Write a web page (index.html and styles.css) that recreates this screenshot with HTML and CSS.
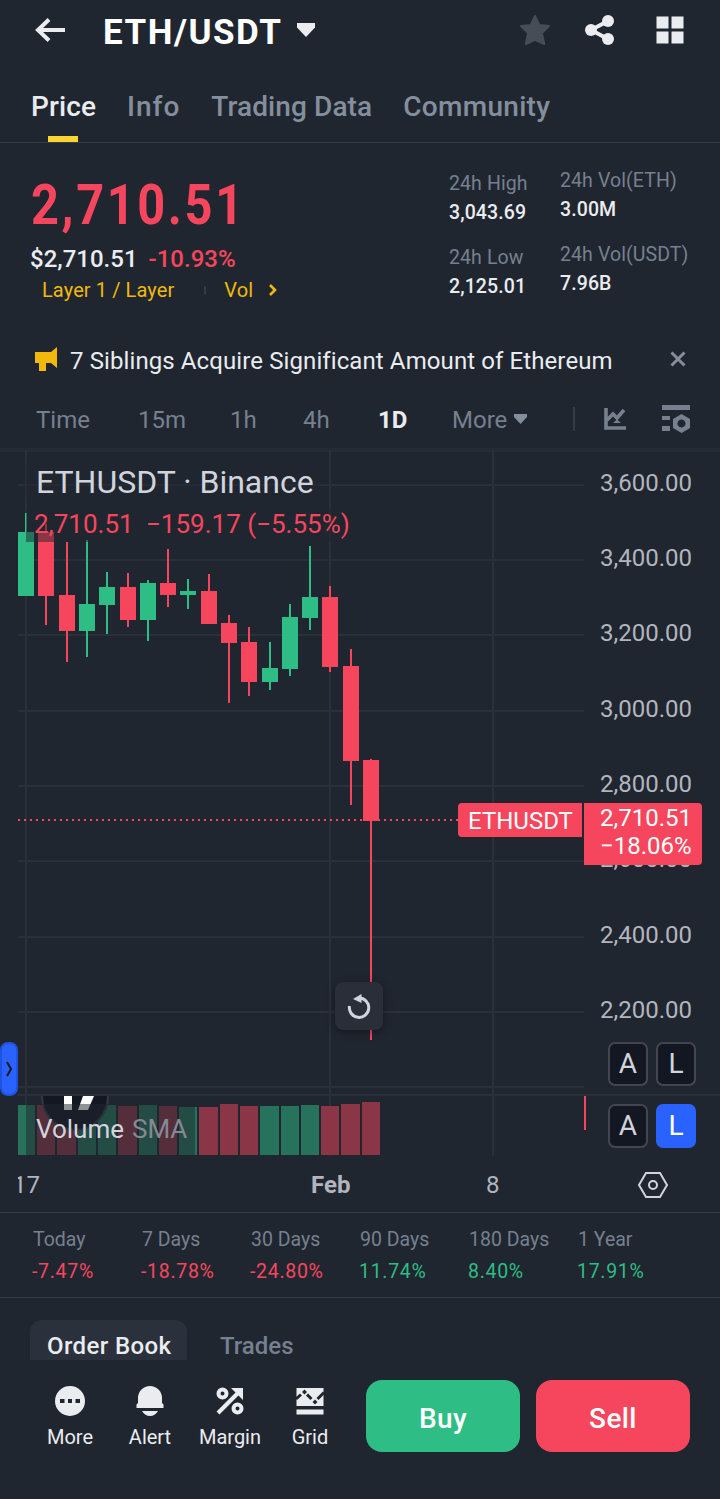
FILE: index.html
```html
<!DOCTYPE html>
<html lang="en">

<head>
    <meta charset="UTF-8">
    <meta name="viewport" content="width=device-width, initial-scale=1.0">
    <title>ETH/USDT</title>
    <link rel="stylesheet" href="styles.css">
</head>

<body>
    <header class="topbar">
        <svg class="back" width="32" height="26" viewBox="0 0 32 26" fill="none" stroke="#eaecef" stroke-width="4">
            <path d="M31 13H4M15 2.5L4 13l11 10.500" />
        </svg>
        <h1 class="pair">ETH/USDT</h1>
        <svg class="pair-arrow" width="18" height="14" viewBox="0 0 18 14"><path d="M0 0h18v4.500L9 14 0 4.500z" fill="#eaecef" /></svg>
        <div class="top-icons">
            <svg width="30" height="30" viewBox="0 0 30 30"><path d="M15 1l4.200 9 9.800 1.100-7.100 7 2.300 10.900L15 24.800 5.800 29l2.300-10.900-7.100-7L10.800 10z" fill="#474d57" stroke="#474d57" stroke-width="2" stroke-linejoin="round" /></svg>
            <svg class="share" width="30" height="30" viewBox="0 0 30 30" fill="#eaecef">
                <path d="M6 15L23 6M6 15l17 9" stroke="#eaecef" stroke-width="4" />
                <circle cx="6" cy="15" r="6" /><circle cx="23" cy="6" r="6" /><circle cx="23" cy="24" r="6" />
            </svg>
            <svg width="28" height="28" viewBox="0 0 28 28" fill="#eaecef"><path d="M.5.5h12v12H.5zM15.500.5h12v12h-12zM.5 15.500h12v12H.5zM15.500 15.500h12v12h-12z" /></svg>
        </div>
    </header>

    <nav class="tabs">
        <a class="tab active">Price</a>
        <a class="tab info">Info</a>
        <a class="tab">Trading Data</a>
        <a class="tab community">Community</a>
    </nav>

    <section class="summary">
        <div class="price-col">
            <div class="last-price">2,710.51</div>
            <div class="fiat"><span>$2,710.51</span><span class="red">-10.93%</span></div>
            <div class="tags">
                <span>Layer 1 / Layer</span>
                <i class="tag-line"></i>
                <span>Vol</span>
                <svg width="8" height="12" viewBox="0 0 8 12" fill="none" stroke="#f0b90b" stroke-width="2.600"><path d="M1 1l5 5-5 5" /></svg>
            </div>
        </div>
        <dl class="stats">
            <dt>24h High</dt>
            <dd>3,043.69</dd>
            <dt>24h Low</dt>
            <dd>2,125.01</dd>
        </dl>
        <dl class="stats vol">
            <dt>24h Vol(ETH)</dt>
            <dd>3.00M</dd>
            <dt>24h Vol(USDT)</dt>
            <dd>7.96B</dd>
        </dl>
    </section>

    <div class="notice">
        <svg width="22" height="24" viewBox="0 0 22 24"><path d="M0 5h16l6-5v21l-6-5h-5v8H4v-8H0z" fill="#f0b90b" /></svg>
        <p>7 Siblings Acquire Significant Amount of Ethereum</p>
        <svg width="16" height="16" viewBox="0 0 16 16" stroke="#848e9c" stroke-width="3"><path d="M1.500 1.500l13 13M14.500 1.500l-13 13" /></svg>
    </div>

    <nav class="intervals">
        <span>Time</span>
        <span>15m</span>
        <span>1h</span>
        <span>4h</span>
        <span class="active">1D</span>
        <span class="more">More <svg width="13" height="10" viewBox="0 0 13 10"><path d="M0 0h13v3L6.500 10 0 3z" fill="#848e9c" /></svg></span>
        <i class="split"></i>
        <svg width="22" height="22" viewBox="0 0 22 22">
            <path d="M2 0v20h20M3 12l6-6 4 4 7-8" fill="none" stroke="#76808f" stroke-width="3.600" />
            <path d="M9 15l4-3.500 4 3.500z" fill="#76808f" />
        </svg>
        <svg width="28" height="28" viewBox="0 0 28 28" fill="#76808f">
            <path d="M0 0h28v5H0zM0 11h8v4H0zM0 21h8v5H0z" />
            <path fill-rule="evenodd" d="M19.500 9l8.500 5v9l-8.500 5-8.500-5v-9zM19.500 14.500a4 4 0 1 0 .01 0z" />
        </svg>
    </nav>

    <svg class="chart" width="720" height="764" viewBox="0 448 720 764">
        <rect x="0" y="448" width="720" height="4" fill="#252b35" />
        <!-- grid -->
        <path class="grid" d="M18 485h566M18 560h566M18 635h566M18 711h566M18 786h566M18 861h566M18 937h566M18 1012h566M18 1087h566M18 1095h702M26 450v706M330 450v706M493 450v706" />

        <!-- candles -->
        <path class="up" d="M25 513h2v20h-2zM18 532h16v64H18z" />
        <path class="down" d="M45 524h2v101h-2zM38 532h16v64H38z" />
        <path class="down" d="M66 542h2v120h-2zM59 595h16v36H59z" />
        <path class="up" d="M86 540h2v117h-2zM79 604h16v27H79z" />
        <path class="up" d="M106 572h2v62h-2zM99 587h16v18H99z" />
        <path class="down" d="M127 573h2v54h-2zM120 587h16v33h-16z" />
        <path class="up" d="M147 580h2v61h-2zM140 583h16v37h-16z" />
        <path class="down" d="M167 549h2v58h-2zM160 583h16v12h-16z" />
        <path class="up" d="M187 579h2v30h-2zM180 591h16v4h-16z" />
        <path class="down" d="M208 574h2v50h-2zM201 591h16v33h-16z" />
        <path class="down" d="M228 615h2v88h-2zM221 623h16v20h-16z" />
        <path class="down" d="M248 627h2v69h-2zM241 642h16v40h-16z" />
        <path class="up" d="M269 642h2v48h-2zM262 668h16v14h-16z" />
        <path class="up" d="M289 604h2v72h-2zM282 617h16v52h-16z" />
        <path class="up" d="M309 546h2v84h-2zM302 597h16v21h-16z" />
        <path class="down" d="M329 586h2v86h-2zM322 597h16v70h-16z" />
        <path class="down" d="M350 649h2v156h-2zM343 666h16v95h-16z" />
        <path class="down" d="M370 759h2v281h-2zM363 760h16v61h-16z" />

        <!-- legend -->
        <rect class="legend-bg" x="26" y="464" width="294" height="38" />
        <rect class="legend-bg" x="26" y="508" width="331" height="34" />
        <text class="legend-title" x="36" y="493">ETHUSDT · Binance</text>
        <text class="legend-value" x="34" y="533">2,710.51</text>
        <text class="legend-value" x="146" y="533">−159.17 (−5.55%)</text>

        <!-- price axis -->
        <g class="axis">
            <text x="600" y="491">3,600.00</text>
            <text x="600" y="566">3,400.00</text>
            <text x="600" y="641">3,200.00</text>
            <text x="600" y="717">3,000.00</text>
            <text x="600" y="792">2,800.00</text>
            <text x="600" y="867">2,600.00</text>
            <text x="600" y="943">2,400.00</text>
            <text x="600" y="1018">2,200.00</text>
        </g>
        <path d="M18 820h440" stroke="#f6465d" stroke-width="2" stroke-dasharray="2 4" />
        <path class="down" d="M462 803h120v34H462a4 4 0 0 1-4-4v-26a4 4 0 0 1 4-4z" />
        <path class="down" d="M584 803h114a4 4 0 0 1 4 4v54a4 4 0 0 1-4 4H584z" />
        <g class="label">
            <text x="468" y="829">ETHUSDT</text>
            <text x="600" y="826">2,710.51</text>
            <text x="600" y="854">−18.06%</text>
        </g>

        <!-- volume -->
        <path class="vol-up" d="M18 1105h17v50H18zM78 1105h18v50H78zM98 1105h18v50H98zM139 1105h18v50h-18zM179 1107h18v48h-18zM260 1106h19v49h-19zM281 1106h18v49h-18zM301 1105h18v50h-18z" />
        <path class="vol-down" d="M37 1105h18v50H37zM57 1105h19v50H57zM118 1106h19v49h-19zM159 1106h18v49h-18zM199 1107h19v48h-19zM220 1104h18v51h-18zM240 1106h18v49h-18zM321 1106h18v49h-18zM341 1104h19v51h-19zM362 1102h18v53h-18z" />
        <path d="M42 1096a33 34 0 0 0 66 0z" fill="#131722" />
        <path d="M42 1096a33 34 0 0 0 66 0" fill="none" stroke="#343944" stroke-width="2" />
        <path d="M64 1096h8v14h-8zM83 1096h11l-6 14H78z" fill="#fff" />
        <rect class="legend-bg" x="26" y="1104" width="169" height="51" />
        <text class="legend-vol" x="36" y="1138">Volume <tspan x="132" fill="#868993">SMA</tspan></text>
        <path class="down" d="M584 1096h2v34h-2z" />

        <!-- scale buttons -->
        <g class="scale">
            <rect x="609" y="1043" width="38" height="42" rx="6" />
            <rect x="657" y="1043" width="38" height="42" rx="6" />
            <rect x="609" y="1105" width="38" height="42" rx="6" />
            <rect class="on" x="657" y="1105" width="38" height="42" rx="6" />
            <text x="628" y="1073">A</text>
            <text x="676" y="1073">L</text>
            <text x="628" y="1135">A</text>
            <text class="on" x="676" y="1135">L</text>
        </g>

        <!-- reset -->
        <g class="reset">
            <rect x="335" y="982" width="48" height="48" rx="8" fill="#2a2e39" />
        </g>
        <path d="M349.500 1006a9.700 9.700 0 1 0 9.500-8" fill="none" stroke="#d1d4dc" stroke-width="3" />
        <path d="M353 999l8.500-5v9z" fill="#d1d4dc" />

        <!-- drawer handle -->
        <rect x="1" y="1043" width="16" height="52" rx="7" fill="#2962ff" stroke="#1f52e0" stroke-width="2" />
        <path d="M7 1062l4 7-4 7" fill="none" stroke="#131722" stroke-width="2" />

        <!-- time axis -->
        <g class="time">
            <text x="13" y="1193">17</text>
            <text x="311" y="1193" font-weight="bold">Feb</text>
            <text x="486" y="1193">8</text>
        </g>
        <rect x="8" y="1172" width="10" height="26" fill="#202630" />
        <path d="M646 1173h14l7 12-7 12h-14l-7-12z" fill="none" stroke="#d1d4dc" stroke-width="2" />
        <circle cx="653" cy="1185" r="4" fill="none" stroke="#d1d4dc" stroke-width="2" />
    </svg>

    <section class="changes">
        <div><span>Today</span><b class="red">-7.47%</b></div>
        <div><span>7 Days</span><b class="red">-18.78%</b></div>
        <div><span>30 Days</span><b class="red">-24.80%</b></div>
        <div><span>90 Days</span><b class="green">11.74%</b></div>
        <div><span>180 Days</span><b class="green">8.40%</b></div>
        <div><span>1 Year</span><b class="green">17.91%</b></div>
    </section>

    <nav class="book-tabs">
        <a class="book active">Order Book</a>
        <a class="book">Trades</a>
    </nav>

    <footer class="bottom">
        <div class="tool">
            <svg width="30" height="30" viewBox="0 0 30 30"><circle cx="15" cy="15" r="15" fill="#eaecef" /><path d="M5 13h4.500v4H5zM13 13h4v4h-4zM20.500 13H25v4h-4.500z" fill="#202630" /></svg>
            <span>More</span>
        </div>
        <div class="tool">
            <svg width="30" height="30" viewBox="0 0 30 30" fill="#eaecef"><path d="M3 12a12 12 0 0 1 24 0v5l1.500 1.500V22h-27v-3.500L3 17zM7 25h16q-3 5-8 5t-8-5z" /></svg>
            <span>Alert</span>
        </div>
        <div class="tool">
            <svg width="30" height="30" viewBox="0 0 30 30" fill="none" stroke="#eaecef" stroke-width="4">
                <path d="M3 27L24 6" />
                <circle cx="7.500" cy="7.500" r="4" /><circle cx="22.500" cy="22.500" r="4" />
                <path d="M16 2h12v12z" fill="#eaecef" stroke="none" />
            </svg>
            <span>Margin</span>
        </div>
        <div class="tool">
            <svg width="30" height="30" viewBox="0 0 30 30">
                <path d="M1.500 2h27v18h-27zM1.500 23.500h27v5h-27z" fill="#eaecef" />
                <path d="M1 13l5-4.500M12 8.500l4.500 4.500M22.500 13L29 6.500" fill="none" stroke="#202630" stroke-width="3" />
                <path d="M9.500 3.500L12 6 9.500 8.500 7 6zM20 13.500l2.500 2.500-2.500 2.500-2.500-2.500z" fill="#202630" />
            </svg>
            <span>Grid</span>
        </div>
        <button class="trade buy">Buy</button>
        <button class="trade sell">Sell</button>
    </footer>
</body>

</html>
```
FILE: styles.css
```css
* {
    box-sizing: border-box;
}

body {
    margin: 0;
    width: 720px;
    height: 1499px;
    overflow: hidden;
    background-color: #202630;
    color: #eaecef;
    font-family: Roboto, 'Liberation Sans', sans-serif;
}

svg {
    display: block;
    flex: none;
}

.red {
    color: #f6465d;
}

.green {
    color: #2ebd85;
}

/* header */
.topbar {
    display: flex;
    align-items: center;
    height: 72px;
    padding: 0 36px 12px 34px;
}

.pair {
    margin: 5px 0 0 37px;
    width: 193px;
    font-size: 35px;
    line-height: 40px;
    font-weight: bold;
    letter-spacing: 1.500px;
    color: white;
}

.pair-arrow {
    margin-left: 1px;
}

.top-icons {
    display: flex;
    align-items: center;
    justify-content: space-between;
    width: 164px;
    margin-left: auto;
}

.share {
    margin-right: 7px;
}

.tabs {
    display: flex;
    gap: 31px;
    height: 71px;
    padding-left: 31px;
    border-bottom: 1px solid #333b47;
}

.tab {
    position: relative;
    padding-top: 17px;
    font-size: 28px;
    line-height: 36px;
    font-weight: 500;
    letter-spacing: .1px;
    color: #848e9c;
}

.tab.active {
    color: #eaecef;
}

.tab.active::after {
    content: '';
    position: absolute;
    bottom: 0;
    left: 17px;
    width: 30px;
    height: 6px;
    background-color: #fcd535;
}

.tab.info {
    letter-spacing: 1px;
}

.tab.community {
    letter-spacing: .3px;
}

/* price and 24h stats */
.summary {
    display: grid;
    grid-template-columns: 419px 111px 1fr;
    height: 187px;
    padding: 26px 0 0 30px;
}

.last-price {
    margin: 5px 0 0 1px;
    font-size: 56px;
    line-height: 62px;
    font-weight: bold;
    letter-spacing: 3px;
    color: #f6465d;
    transform: scaleX(.87);
    transform-origin: left;
}

.fiat {
    display: flex;
    gap: 11px;
    margin-top: 8px;
    font-size: 24px;
    line-height: 30px;
    font-weight: 500;
}

.tags {
    display: flex;
    align-items: center;
    margin-top: 4px;
    padding-left: 12px;
    font-size: 20px;
    line-height: 24px;
    letter-spacing: .1px;
    color: #f0b90b;
}

.tag-line {
    width: 2px;
    height: 8px;
    margin: 0 18px 0 30px;
    background-color: #333b47;
}

.tags svg {
    margin-left: 16px;
}

.stats {
    margin: 3px 0 0;
    font-size: 19.500px;
    line-height: 24px;
    letter-spacing: .1px;
}

.stats.vol {
    margin-top: 0;
}

.stats dt {
    color: #76808f;
}

.stats dd {
    margin: 5px 0 21px;
    font-weight: 500;
}

.notice {
    display: flex;
    align-items: center;
    height: 60px;
    padding: 0 34px 2px 35px;
}

.notice p {
    margin: 3px 0 0 13px;
    width: 600px;
    font-size: 24px;
    letter-spacing: .1px;
    white-space: nowrap;
}

.intervals {
    display: grid;
    grid-template-columns: 102px 92px 73px 75px 74px 121px 31px 58px 28px;
    align-items: center;
    height: 58px;
    padding-left: 36px;
    font-size: 24px;
    color: #76808f;
}

.intervals span {
    padding-top: 2px;
}

.intervals .active {
    font-weight: bold;
    color: #eaecef;
}

.intervals .more {
    display: flex;
    align-items: center;
    gap: 7px;
}

.more svg {
    margin-top: -3px;
}

.split {
    width: 2px;
    height: 24px;
    background-color: #333b47;
}

/* chart */
.grid {
    stroke: #2a303a;
    stroke-width: 2;
}

.up {
    fill: #2ebd85;
}

.down {
    fill: #f6465d;
}

.vol-up {
    fill: #27725b;
}

.vol-down {
    fill: #8b3646;
}

.legend-bg {
    fill: #202630;
    fill-opacity: .5;
}

.legend-title {
    font-size: 32px;
    fill: #d1d4dc;
}

.legend-value {
    font-size: 26px;
    fill: #f6465d;
}

.legend-vol {
    font-size: 26px;
    fill: #d1d4dc;
}

.axis,
.time {
    font-size: 24px;
    fill: #b2b5be;
}

.label {
    font-size: 24px;
    fill: white;
}

.scale rect {
    fill: #131722;
    stroke: #434651;
    stroke-width: 2;
}

.scale rect.on {
    fill: #2962ff;
    stroke: #2962ff;
}

.scale text {
    font-size: 28px;
    text-anchor: middle;
    fill: #d1d4dc;
}

.scale text.on {
    fill: white;
}

.reset {
    filter: drop-shadow(0 2px 4px rgba(0, 0, 0, 0.4));
}

.changes {
    display: grid;
    grid-template-columns: 109px 109px 109px 109px 109px 1fr;
    height: 86px;
    padding: 14px 0 0 33px;
    border-top: 1px solid #333b47;
    border-bottom: 1px solid #333b47;
    font-size: 19.500px;
    line-height: 26px;
}

.changes span {
    display: block;
    color: #76808f;
}

.changes b {
    display: block;
    margin: 6px 0 0 -1px;
    font-weight: normal;
    letter-spacing: .7px;
}

.book-tabs {
    display: flex;
    height: 62px;
    padding: 22px 0 0 30px;
}

.book {
    height: 40px;
    padding: 10px 16px 0;
    font-size: 24px;
    line-height: 32px;
    font-weight: 500;
    white-space: nowrap;
    color: #76808f;
}

.book.active {
    width: 157px;
    margin-right: 17px;
    padding: 10px 0 0 17px;
    border-radius: 12px 12px 0 0;
    background-color: #2b313c;
    letter-spacing: .4px;
    color: #eaecef;
}

.bottom {
    display: flex;
    height: 139px;
    padding: 20px 30px 0;
}

.tool {
    display: flex;
    flex-direction: column;
    align-items: center;
    width: 80px;
    padding-top: 6px;
    font-size: 20px;
    line-height: 24px;
}

.tool span {
    margin-top: 9px;
}

.trade {
    width: 154px;
    height: 72px;
    margin-left: 16px;
    padding: 4px 0 0;
    border: none;
    border-radius: 16px;
    font-family: inherit;
    font-size: 28px;
    font-weight: 500;
    letter-spacing: .4px;
    color: white;
}

.buy {
    background-color: #2ebd85;
}

.sell {
    background-color: #f6465d;
}
```
